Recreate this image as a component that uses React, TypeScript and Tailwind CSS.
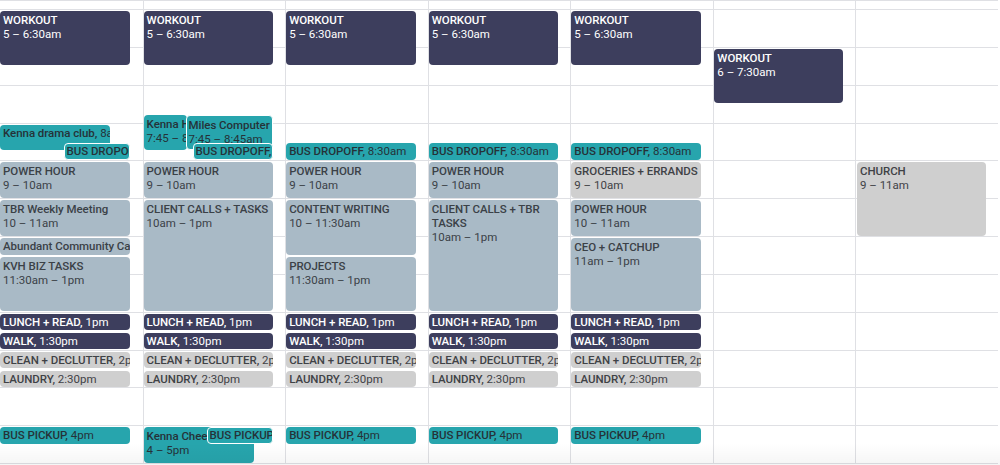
import React from 'react';

const HOUR = 37.85;
const at = (t: number) => 10 + (t - 5) * HOUR;

type Tone = 'navy' | 'teal' | 'slate' | 'gray';

type CalEvent = {
  title: string;
  time: string;
  start: number;
  end: number;
  tone: Tone;
  single?: boolean;
  nowrap?: boolean;
  left?: number;
  width?: number;
  ring?: boolean;
};

const tones: Record<Tone, string> = {
  navy: 'bg-[#3d3e5d] text-white',
  teal: 'bg-[#27a5ad] text-[#253238]',
  slate: 'bg-[#a9bac6] text-[#3b4147]',
  gray: 'bg-[#cfcfcf] text-[#3f4246]',
};

const workout: CalEvent = { title: 'WORKOUT', time: '5 – 6:30am', start: 5, end: 6.5, tone: 'navy' };
const dropoff: CalEvent = { title: 'BUS DROPOFF', time: '8:30am', start: 8.5, end: 9, tone: 'teal', single: true };
const powerHour: CalEvent = { title: 'POWER HOUR', time: '9 – 10am', start: 9, end: 10, tone: 'slate' };
const lunch: CalEvent = { title: 'LUNCH + READ', time: '1pm', start: 13, end: 13.5, tone: 'navy', single: true };
const walk: CalEvent = { title: 'WALK', time: '1:30pm', start: 13.5, end: 14, tone: 'navy', single: true };
const clean: CalEvent = { title: 'CLEAN + DECLUTTER', time: '2pm', start: 14, end: 14.5, tone: 'gray', single: true };
const laundry: CalEvent = { title: 'LAUNDRY', time: '2:30pm', start: 14.5, end: 15, tone: 'gray', single: true };
const pickup: CalEvent = { title: 'BUS PICKUP', time: '4pm', start: 16, end: 16.5, tone: 'teal', single: true };
const afternoon = [lunch, walk, clean, laundry];

const days: CalEvent[][] = [
  [
    workout,
    { title: 'Kenna drama club', time: '8am', start: 8, end: 8.75, tone: 'teal', single: true, width: 109.5 },
    { ...dropoff, left: 63.5, width: 66, ring: true },
    powerHour,
    { title: 'TBR Weekly Meeting', time: '10 – 11am', start: 10, end: 11, tone: 'slate' },
    { title: 'Abundant Community Call', time: '11am', start: 11, end: 11.5, tone: 'slate', single: true },
    { title: 'KVH BIZ TASKS', time: '11:30am – 1pm', start: 11.5, end: 13, tone: 'slate' },
    ...afternoon,
    pickup,
  ],
  [
    workout,
    { title: 'Kenna Hip Hop', time: '7:45 – 8:45am', start: 7.75, end: 8.75, tone: 'teal', nowrap: true, width: 43 },
    { title: 'Miles Computer Class', time: '7:45 – 8:45am', start: 7.75, end: 8.75, tone: 'teal', nowrap: true, left: 42, width: 87, ring: true },
    { ...dropoff, left: 49, width: 80, ring: true },
    powerHour,
    { title: 'CLIENT CALLS + TASKS', time: '10am – 1pm', start: 10, end: 13, tone: 'slate' },
    ...afternoon,
    { title: 'Kenna Cheer', time: '4 – 5pm', start: 16, end: 17, tone: 'teal', nowrap: true, width: 110 },
    { ...pickup, left: 63, width: 66, ring: true },
  ],
  [
    workout,
    dropoff,
    powerHour,
    { title: 'CONTENT WRITING', time: '10 – 11:30am', start: 10, end: 11.5, tone: 'slate' },
    { title: 'PROJECTS', time: '11:30am – 1pm', start: 11.5, end: 13, tone: 'slate' },
    ...afternoon,
    pickup,
  ],
  [
    workout,
    dropoff,
    powerHour,
    { title: 'CLIENT CALLS + TBR TASKS', time: '10am – 1pm', start: 10, end: 13, tone: 'slate' },
    ...afternoon,
    pickup,
  ],
  [
    workout,
    dropoff,
    { title: 'GROCERIES + ERRANDS', time: '9 – 10am', start: 9, end: 10, tone: 'gray' },
    { title: 'POWER HOUR', time: '10 – 11am', start: 10, end: 11, tone: 'slate' },
    { title: 'CEO + CATCHUP', time: '11am – 1pm', start: 11, end: 13, tone: 'slate' },
    ...afternoon,
    pickup,
  ],
  [{ title: 'WORKOUT', time: '6 – 7:30am', start: 6, end: 7.5, tone: 'navy', left: 0.5, width: 128.5 }],
  [{ title: 'CHURCH', time: '9 – 11am', start: 9, end: 11, tone: 'gray', left: 0.5, width: 129 }],
];

function EventChip({ ev }: { ev: CalEvent }) {
  const top = at(ev.start);
  const height = (ev.end - ev.start) * HOUR - 2.5;
  return (
    <div
      className={`absolute overflow-hidden rounded-[4px] text-[11.5px] leading-[14px] ${tones[ev.tone]} ${
        ev.ring ? 'border border-white pl-[2px]' : 'pl-[3px]'
      }`}
      style={{ top, height, left: ev.left ?? 0, width: ev.width ?? 129.5 }}
    >
      {ev.single ? (
        <div className={`whitespace-nowrap ${ev.ring ? '' : 'pt-px'}`}>
          <span className="font-medium tracking-[-0.05px]">{ev.title},</span> {ev.time}
        </div>
      ) : (
        <div className="pt-[2px]">
          <div className={`font-medium tracking-[-0.05px] ${ev.nowrap ? 'whitespace-nowrap' : ''}`}>{ev.title}</div>
          <div className="whitespace-nowrap">{ev.time}</div>
        </div>
      )}
    </div>
  );
}

export default function App() {
  return (
    <div className="relative h-[465px] w-[1000px] overflow-hidden bg-white font-['Roboto','Noto_Sans',sans-serif] antialiased">
      <div className="grid w-[998px] grid-cols-7 border-t border-[#dfe0e4]">
        {days.map((events, i) => (
          <div key={i} className={`relative ${i > 0 ? 'border-l border-[#dfe0e4]' : ''}`}>
            <div className="h-[9px] border-b border-[#dfe0e4]" />
            {Array.from({ length: 12 }).map((_, h) => (
              <div key={h} className="h-[37.85px] border-b border-[#dfe0e4]" />
            ))}
            {events.map((ev, k) => (
              <EventChip key={k} ev={ev} />
            ))}
          </div>
        ))}
      </div>
      <div className="pointer-events-none absolute inset-x-0 bottom-0 h-[22px] bg-gradient-to-b from-transparent to-[#000]/[0.04]" />
    </div>
  );
}
